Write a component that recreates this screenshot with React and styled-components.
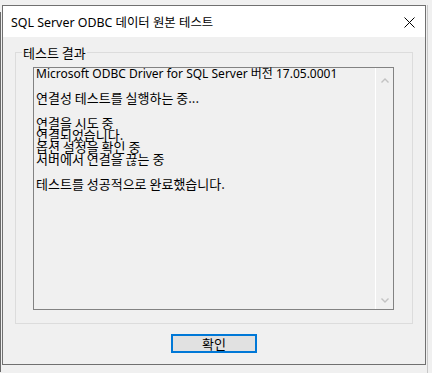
import React from "react";
import styled, { createGlobalStyle } from "styled-components";

const Global = createGlobalStyle`
  html, body { margin: 0; padding: 0; background: #f0f0f0; }
  #root { width: 432px; height: 373px; overflow: hidden; }
`;

const Screen = styled.div`
  position: relative;
  width: 432px;
  height: 373px;
  background: #f0f0f0;
  padding: 5px 0 0 2px;
  box-sizing: border-box;
  font-family: "Noto Sans", "Noto Sans CJK KR", sans-serif;
`;

const BehindLine = styled.div`
  position: absolute;
  top: ${(p) => p.$top}px;
  left: ${(p) => p.$left}px;
  width: 1px;
  height: ${(p) => p.$h}px;
  background: ${(p) => p.$color};
`;

const Dialog = styled.div`
  position: relative;
  width: 424px;
  height: 360px;
  box-sizing: border-box;
  border: 1px solid #707070;
  background: #f0f0f0;
  display: flex;
  flex-direction: column;
`;

const TitleBar = styled.div`
  height: 31px;
  background: #ffffff;
  display: flex;
  align-items: center;
  justify-content: space-between;
  padding: 0 10px 0 8px;
  flex-shrink: 0;
`;

const Title = styled.div`
  font-family: "Noto Sans", "Noto Sans CJK KR", sans-serif;
  font-size: 12.4px;
  color: #000;
  margin-top: 1px;
`;

const CloseIcon = styled.svg`
  width: 11px;
  height: 11px;
  margin-top: 1px;
`;

const Body = styled.div`
  flex: 1;
  display: flex;
  flex-direction: column;
  align-items: stretch;
  padding: 8px 12px 0 12px;
`;

const Group = styled.fieldset`
  margin: 0;
  height: 279px;
  box-sizing: border-box;
  border: 1px solid #dcdcdc;
  padding: 7px 18px 0 17px;
`;

const Legend = styled.legend`
  font-family: "Noto Sans CJK KR", sans-serif;
  font-size: 13px;
  line-height: 15px;
  padding: 0 1px;
  margin-left: -11px;
  color: #000;
`;

const TextBox = styled.div`
  height: 243px;
  box-sizing: border-box;
  border: 1px solid #828282;
  display: flex;
  background: #f0f0f0;
`;

const TextArea = styled.div`
  flex: 1;
  padding: 0 2px;
  color: #000;
  white-space: pre;
  border-right: 1px solid #ffffff;
`;

const Line = styled.div`
  height: 12.2px;
  line-height: 12.2px;
  font-family: ${(p) => (p.$latin ? '"Noto Sans", "Noto Sans CJK KR", sans-serif' : '"Noto Sans CJK KR", sans-serif')};
  font-size: ${(p) => (p.$latin ? "12px" : "13px")};
`;

const ScrollBar = styled.div`
  width: 17px;
  display: flex;
  flex-direction: column;
  justify-content: space-between;
  align-items: center;
  padding: 10px 0 6px;
`;

const Chevron = styled.svg`
  width: 8px;
  height: 5px;
`;

const Footer = styled.div`
  display: flex;
  justify-content: center;
  padding-top: 10px;
`;

const Button = styled.button`
  width: 86px;
  height: 19px;
  box-sizing: border-box;
  border: 2px solid #0078d7;
  background: #e1e1e1;
  font-family: "Noto Sans CJK KR", sans-serif;
  font-size: 13px;
  line-height: 13px;
  color: #000;
  padding: 0;
`;

const lines = [
  { t: "Microsoft ODBC Driver for SQL Server 버전 17.05.0001", latin: true },
  { t: "" },
  { t: "연결성 테스트를 실행하는 중..." },
  { t: "" },
  { t: "연결을 시도 중" },
  { t: "연결되었습니다." },
  { t: "옵션 설정을 확인 중" },
  { t: "서버에서 연결을 끊는 중" },
  { t: "" },
  { t: "테스트를 성공적으로 완료했습니다." },
];

export default function App() {
  return (
    <>
      <Global />
      <Screen>
        <BehindLine $top={12} $left={0} $h={360} $color="#6a6a6a" />
        <BehindLine $top={5} $left={427} $h={368} $color="#c8c8c8" />
        <Dialog>
          <TitleBar>
            <Title>SQL Server ODBC 데이터 원본 테스트</Title>
            <CloseIcon viewBox="0 0 11 11">
              <path d="M0.5 0.5 L10.5 10.5 M10.5 0.5 L0.5 10.5" stroke="#000" strokeWidth="1" fill="none" />
            </CloseIcon>
          </TitleBar>
          <Body>
            <Group>
              <Legend>테스트 결과</Legend>
              <TextBox>
                <TextArea>
                  {lines.map((l, i) => (
                    <Line key={i} $latin={l.latin}>
                      {l.t}
                    </Line>
                  ))}
                </TextArea>
                <ScrollBar>
                  <Chevron viewBox="0 0 8 5">
                    <path d="M0.5 4.5 L4 1 L7.5 4.5" stroke="#c2c2c2" strokeWidth="1.4" fill="none" />
                  </Chevron>
                  <Chevron viewBox="0 0 8 5">
                    <path d="M0.5 0.5 L4 4 L7.5 0.5" stroke="#c2c2c2" strokeWidth="1.4" fill="none" />
                  </Chevron>
                </ScrollBar>
              </TextBox>
            </Group>
            <Footer>
              <Button>확인</Button>
            </Footer>
          </Body>
        </Dialog>
      </Screen>
    </>
  );
}
